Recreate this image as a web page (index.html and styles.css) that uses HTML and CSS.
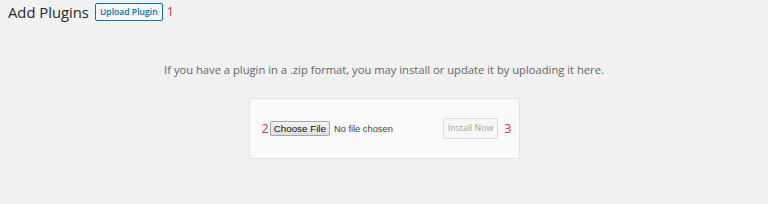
FILE: index.html
```html
<!DOCTYPE html>
<html lang="en">
<head>
<meta charset="UTF-8">
<title>Add Plugins</title>
<link rel="stylesheet" href="styles.css">
</head>
<body>
	<div class="wrap">
		<div class="title-row">
			<h1>Add Plugins</h1>
			<a class="title-action" href="#">Upload Plugin</a>
			<span class="mark">1</span>
		</div>
		<p class="install-help">If you have a plugin in a .zip format, you may install or update it by uploading it here.</p>
		<div class="upload-plugin">
			<form class="upload-form">
				<div class="file-field">
					<span class="mark">2</span>
					<span class="file-btn">Choose File</span>
					<span class="file-name">No file chosen</span>
				</div>
				<div class="submit-field">
					<span class="install-btn">Install Now</span>
					<span class="mark">3</span>
				</div>
			</form>
		</div>
	</div>
</body>
</html>
```

FILE: styles.css
```css
body {
	margin: 0;
	background-color: #f1f1f1;
	font-family: "Open Sans", sans-serif;
	color: #444;
}
.wrap {
	padding: 3px 0 0 8px;
}
.title-row {
	display: flex;
	align-items: center;
	height: 18px;
}
h1 {
	margin: 0;
	font-size: 14.8px;
	font-weight: 400;
	line-height: 18px;
	color: #23282d;
}
.title-action {
	margin-left: 6px;
	height: 18px;
	box-sizing: border-box;
	padding: 0 4px;
	border: 1px solid #0073aa;
	border-radius: 2px;
	background-color: #f7f7f7;
	color: #0073aa;
	font-size: 8.6px;
	font-weight: 600;
	line-height: 16px;
	text-decoration: none;
}
.mark {
	color: #ec2c33;
	font-size: 12.5px;
	line-height: 16px;
	margin-left: 4px;
}
.install-help {
	margin: 40px 0 0;
	padding-right: 8px;
	text-align: center;
	font-size: 11.2px;
	line-height: 18px;
	color: #666;
}
.upload-plugin {
	display: flex;
	justify-content: center;
	margin-top: 19px;
	padding-right: 8px;
}
.upload-form {
	display: flex;
	align-items: center;
	justify-content: space-between;
	width: 271px;
	height: 61px;
	box-sizing: border-box;
	margin: 0;
	padding: 0 9px 0 12px;
	border: 1px solid #e5e5e5;
	background-color: #fafafa;
}
.file-field,
.submit-field {
	display: flex;
	align-items: center;
}
.file-field .mark {
	margin: 0 1px 0 0;
}
.file-btn {
	height: 15px;
	box-sizing: border-box;
	padding: 0 3px;
	border: 1px solid #a6a6a6;
	border-radius: 2px;
	background: linear-gradient(#f4f4f4, #dedede);
	color: #111;
	font-family: "Liberation Sans", Arial, sans-serif;
	font-size: 9.8px;
	line-height: 13px;
}
.file-name {
	margin-left: 4px;
	color: #444;
	font-family: "Liberation Sans", Arial, sans-serif;
	font-size: 9.3px;
}
.install-btn {
	height: 21px;
	box-sizing: border-box;
	padding: 0 4px;
	border: 1px solid #ddd;
	border-radius: 2px;
	background-color: #f7f7f7;
	color: #a0a5aa;
	font-size: 8.8px;
	line-height: 19px;
}
.submit-field .mark {
	margin-left: 6px;
	margin-right: -2px;
}
```
